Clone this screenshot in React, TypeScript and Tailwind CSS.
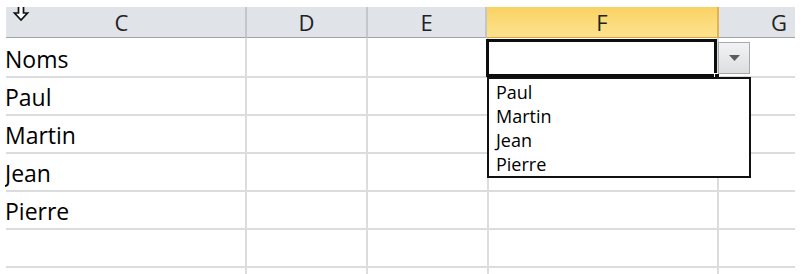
import type { ReactNode } from "react"

const NAMES = ["Noms", "Paul", "Martin", "Jean", "Pierre", "", ""]
const LIST = ["Paul", "Martin", "Jean", "Pierre"]

const cellFont = { fontFamily: '"Open Sans", "Noto Sans", sans-serif' }

function ColumnCursor() {
	return (
		<svg
			width="18"
			height="18"
			viewBox="0 0 18 18"
			className="absolute left-[6px] top-[-3px]"
		>
			<path
				d="M6.5 1 H11.5 V9 H15.5 L9 16 L2.5 9 H6.5 Z"
				fill="white"
				stroke="#111"
				strokeWidth="1.7"
				strokeLinejoin="miter"
			/>
		</svg>
	)
}

type HeaderCellPT = {
	label: string
	width: string
	className?: string
	selected?: boolean
}
function HeaderCell({ label, width, className, selected }: HeaderCellPT) {
	return (
		<div
			className={`flex h-full shrink-0 items-center border-r-2 text-[22px] leading-none ${width} ${
				selected
					? "border-r-[#e4b34f] border-b border-b-[#e3a33a] bg-gradient-to-b from-[#f9d262] to-[#fde28e] text-[#222]"
					: "border-r-[#c3c7cc] border-b border-b-[#9ea4aa] bg-[#e0e4e9] text-[#222]"
			} ${className ?? "justify-center"}`}
		>
			{label}
		</div>
	)
}

function Header() {
	return (
		<div
			className="relative flex h-[31px] overflow-hidden"
			style={cellFont}
		>
			<ColumnCursor />
			<HeaderCell label="C" width="w-[241px]" className="justify-center pr-[8px]" />
			<HeaderCell label="D" width="w-[121px]" />
			<HeaderCell label="E" width="w-[119px]" />
			<HeaderCell label="F" width="w-[232px]" selected />
			<HeaderCell label="G" width="w-[76px]" className="justify-start pl-[52px] !border-r-0" />
		</div>
	)
}

type CellPT = {
	width: string
	first: boolean
	children?: ReactNode
	last?: boolean
}
function Cell({ width, first, children, last }: CellPT) {
	return (
		<div
			className={`relative shrink-0 border-b-2 border-b-[#dadcdd] ${
				last ? "" : "border-r-2 border-r-[#dadcdd]"
			} ${width} ${first ? "h-[40px] pt-[6px]" : "h-[38px] pt-[4px]"}`}
		>
			{children}
		</div>
	)
}

function SelectedOverlay() {
	return (
		<>
			<div className="absolute left-[-3px] top-[1px] z-10 h-[38px] w-[231px] border-[3px] border-[#0d0d0d]" />
			<div className="absolute left-[225px] top-[35px] z-20 h-[6px] w-[6px] border border-white bg-[#0d0d0d]" />
			<div className="absolute left-[229px] top-[4px] z-20 flex h-[32px] w-[32px] items-center justify-center border border-[#a6a9ad] bg-gradient-to-b from-[#f2f3f4] to-[#dcdee0]">
				<svg width="11" height="6" viewBox="0 0 11 6">
					<path d="M0 0 H11 L5.5 6 Z" fill="#5c5c5c" />
				</svg>
			</div>
			<div
				className="absolute left-[-2px] top-[39px] z-30 h-[101px] w-[264px] border-2 border-[#111] bg-white pl-[7px] pt-[1px] text-[18px] leading-[24px] text-black"
				style={cellFont}
			>
				{LIST.map((name) => (
					<div key={name}>{name}</div>
				))}
			</div>
		</>
	)
}

function Row({ name, index }: { name: string; index: number }) {
	const first = index === 0
	return (
		<div
			className="flex text-[23px] leading-[31px] text-black"
			style={cellFont}
		>
			<Cell width="w-[241px]" first={first}>
				<div className="-ml-[1px] overflow-hidden whitespace-nowrap">{name}</div>
			</Cell>
			<Cell width="w-[121px]" first={first} />
			<Cell width="w-[121px]" first={first} />
			<Cell width="w-[230px]" first={first}>
				{first && <SelectedOverlay />}
			</Cell>
			<Cell width="w-[76px]" first={first} last />
		</div>
	)
}

export default function App() {
	return (
		<div className="h-[274px] w-[803px] overflow-hidden bg-white pl-[6px] pt-[7px]">
			<div className="w-[789px]">
				<Header />
				{NAMES.map((name, index) => (
					<Row key={index} name={name} index={index} />
				))}
			</div>
		</div>
	)
}
